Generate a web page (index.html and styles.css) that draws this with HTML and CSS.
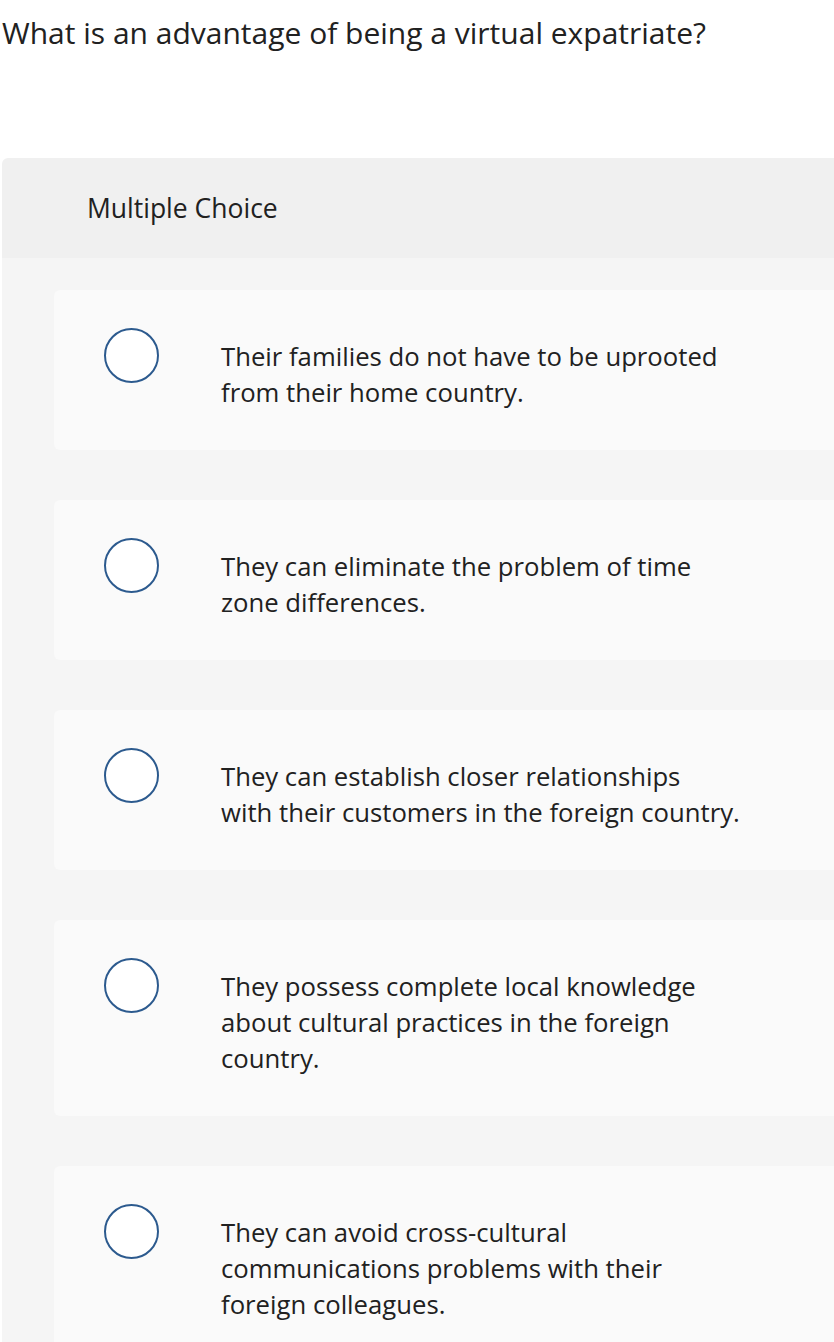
FILE: index.html
```html
<!DOCTYPE html>
<html lang="en">
<head>
  <meta charset="UTF-8">
  <meta name="viewport" content="width=device-width, initial-scale=1.0">
  <title>Question</title>
  <link rel="stylesheet" href="styles.css">
</head>
<body>
  <h1 class="question">What is an advantage of being a virtual expatriate?</h1>

  <div class="panel">
    <div class="panel-header">Multiple Choice</div>
    <div class="panel-body">
      <label class="choice">
        <input type="radio" name="answer">
        <span class="radio"></span>
        <span class="choice-text">Their families do not have to be uprooted from their home country.</span>
      </label>
      <label class="choice">
        <input type="radio" name="answer">
        <span class="radio"></span>
        <span class="choice-text">They can eliminate the problem of time zone differences.</span>
      </label>
      <label class="choice">
        <input type="radio" name="answer">
        <span class="radio"></span>
        <span class="choice-text">They can establish closer relationships<br>with their customers in the foreign country.</span>
      </label>
      <label class="choice">
        <input type="radio" name="answer">
        <span class="radio"></span>
        <span class="choice-text">They possess complete local knowledge about cultural practices in the foreign country.</span>
      </label>
      <label class="choice">
        <input type="radio" name="answer">
        <span class="radio"></span>
        <span class="choice-text">They can avoid cross-cultural communications problems with their foreign colleagues.</span>
      </label>
    </div>
  </div>
</body>
</html>
```

FILE: styles.css
```css
body {
  font-family: 'Open Sans', sans-serif;
  font-variant-ligatures: none;
  background-color: #FFFFFF;
  color: #212121;
  margin: 0;
  padding: 0 0 0 2px;
  overflow-x: hidden;
}

.question {
  margin: 0;
  padding-top: 13px;
  font-size: 30px;
  font-weight: normal;
  line-height: 40px;
  height: 145px;
}

.panel {
  border-radius: 6px 0 0 0;
  overflow: hidden;
}

.panel-header {
  background-color: #F0F0F0;
  height: 100px;
  padding-left: 85px;
  display: flex;
  align-items: center;
  font-size: 26.5px;
}

.panel-body {
  background-color: #F5F5F5;
  padding: 32px 0 0 52px;
  display: flex;
  flex-direction: column;
  gap: 50px;
}

.choice {
  display: flex;
  align-items: flex-start;
  background-color: #FAFAFA;
  border-radius: 6px 0 0 6px;
  padding: 38px 0 39px 50px;
  cursor: pointer;
}

.choice input {
  position: absolute;
  opacity: 0;
  width: 0;
  height: 0;
}

.radio {
  flex: none;
  width: 51px;
  height: 51px;
  border: 2px solid #2C5A8E;
  border-radius: 50%;
  background-color: #FFFFFF;
}

.choice-text {
  margin: 11px 0 0 62px;
  max-width: 530px;
  font-size: 25.7px;
  line-height: 36px;
}
```
